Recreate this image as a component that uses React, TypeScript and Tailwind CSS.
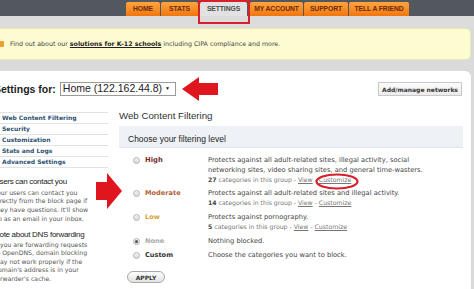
import React from "react";

function Radio({ checked = false }: { checked?: boolean }) {
  return (
    <div className="w-[7px] h-[7px] mt-[1.5px] rounded-full border border-[#b5b5b5] bg-linear-to-b from-[#f4f4f4] to-[#d8d8d8] flex items-center justify-center shrink-0">
      {checked && <div className="w-[3px] h-[3px] rounded-full bg-[#555]" />}
    </div>
  );
}

function Cats({ n }: { n: string }) {
  return (
    <div className="text-[6.2px] leading-[10px] text-[#777] whitespace-nowrap">
      <span className="font-bold text-[#444]">{n}</span> categories in this group -{" "}
      <span className="underline">View</span> - <span className="underline">Customize</span>
    </div>
  );
}

export default function App() {
  const tabs = [
    { t: "HOME", w: "w-[34px]", ml: "ml-0" },
    { t: "STATS", w: "w-[37px]", ml: "ml-[1px]" },
    { t: "SETTINGS", w: "w-[47px]", ml: "ml-[2px]", active: true },
    { t: "MY ACCOUNT", w: "w-[53px]", ml: "ml-[3px]" },
    { t: "SUPPORT", w: "w-[44px]", ml: "ml-[1px]" },
    { t: "TELL A FRIEND", w: "w-[60px]", ml: "ml-[1px]" },
  ];
  return (
    <div className="w-[474px] h-[289px] overflow-hidden bg-[#dadada] flex flex-col relative font-['DejaVu_Sans',sans-serif] text-[#333]">
      {/* header */}
      <div className="h-[16px] shrink-0 bg-[#52585e] flex items-end pl-[126px]">
        {tabs.map((tab) => (
          <div
            key={tab.t}
            className={`${tab.w} ${tab.ml} h-[14px] rounded-t-[2px] flex items-center justify-center font-['Liberation_Sans',sans-serif] font-bold text-[6.8px] tracking-[-0.1px] whitespace-nowrap ${
              tab.active
                ? "bg-[#e2e2e2] text-[#4a4a4a]"
                : "bg-linear-to-b from-[#ffa53e] to-[#f0760a] text-[#6e2b04]"
            }`}
          >
            {tab.t}
          </div>
        ))}
      </div>
      {/* grey strip */}
      <div className="h-[12px] shrink-0 bg-[#dcdcdc]" />
      {/* notice */}
      <div className="h-[32px] shrink-0 ml-[-4px] mr-[3px] bg-[#fdfbd2] border border-[#ebe7b4] rounded-r-[5px] flex items-center">
        <div className="w-[7px] h-[6px] bg-[#f0a030] rounded-[1px] shrink-0" />
        <div className="ml-[6px] text-[6.3px] text-[#444] whitespace-nowrap">
          Find out about our{" "}
          <span className="font-bold underline text-[#222]">solutions for K-12 schools</span>{" "}
          including CIPA compliance and more.
        </div>
      </div>
      <div className="h-[11px] shrink-0" />
      {/* white panel */}
      <div className="flex-1 mr-[3px] bg-white rounded-tr-[6px] relative">
        <div className="ml-[-6px]">
          {/* top row */}
          <div className="flex items-center pt-[11px] pr-[9px]">
            <div className="font-['Liberation_Sans',sans-serif] font-bold text-[10.5px] leading-[14px] text-[#222] whitespace-nowrap">
              Settings for:
            </div>
            <div className="ml-[4px] h-[14px] w-[116px] border border-[#9a9a9a] flex items-center pl-[2px] font-['Liberation_Sans',sans-serif] text-[10.5px] text-[#222] whitespace-nowrap">
              Home (122.162.44.8)
              <span className="ml-[3px] text-[5px]">▼</span>
            </div>
            <svg className="ml-[6px] my-[-5px] shrink-0" width="36" height="24" viewBox="0 0 36 24">
              <polygon points="0,12 17,0 17,6 36,6 36,18 17,18 17,24" fill="#e0161f" />
            </svg>
            <div className="flex-1" />
            <div className="h-[14px] w-[84px] border border-[#c8c8c8] bg-linear-to-b from-[#fbfbfb] to-[#ececec] flex items-center justify-center text-[6px] font-bold text-[#333] whitespace-nowrap">
              Add/manage networks
            </div>
          </div>

          {/* columns */}
          <div className="flex mt-[14px]">
            {/* sidebar */}
            <div className="w-[114px] shrink-0 pt-[2px]">
              <div className="border-t border-[#e2e2e2]">
                {["Web Content Filtering", "Security", "Customization", "Stats and Logs", "Advanced Settings"].map((s) => (
                  <div
                    key={s}
                    className="h-[11px] border-b border-[#e2e2e2] pl-[8px] text-[6px] leading-[10px] font-bold text-[#2c5272] whitespace-nowrap"
                  >
                    {s}
                  </div>
                ))}
              </div>
              <div className="mt-[9px] font-['Liberation_Sans',sans-serif] text-[8px] leading-[10px] tracking-[-0.3px] text-[#222] whitespace-nowrap">
                Users can contact you
              </div>
              <div className="mt-[1.5px] text-[6.2px] leading-[8.7px] text-[#555] whitespace-nowrap">
                <div>Your users can contact you</div>
                <div>directly from the block page if</div>
                <div>they have questions. It'll show</div>
                <div>up as an email in your inbox.</div>
              </div>
              <div className="mt-[6.5px] font-['Liberation_Sans',sans-serif] text-[8px] leading-[10px] tracking-[-0.3px] text-[#222] whitespace-nowrap">
                Note about DNS forwarding
              </div>
              <div className="mt-[1px] text-[6.2px] leading-[8.5px] text-[#555] whitespace-nowrap">
                <div>If you are forwarding requests</div>
                <div>to OpenDNS, domain blocking</div>
                <div>may not work properly if the</div>
                <div>domain's address is in your</div>
                <div>forwarder's cache.</div>
              </div>
            </div>

            {/* main */}
            <div className="ml-[11px] w-[344px] shrink-0">
              <div className="font-['Liberation_Sans',sans-serif] text-[9.7px] leading-[12px] text-[#333] whitespace-nowrap">
                Web Content Filtering
              </div>
              <div className="mt-[4px]">
                <div className="h-[22px] bg-[#eef2f7] border-b border-[#dfe5ec] pl-[9px] pt-[8px] font-['Liberation_Sans',sans-serif] text-[8.5px] leading-[10px] text-[#222]">
                  Choose your filtering level
                </div>
                <div className="pt-[7px] pl-[14px]">
                  {/* High */}
                  <div className="flex">
                    <Radio />
                    <div className="ml-[5px] w-[63px] shrink-0 text-[6.8px] leading-[10px] font-bold text-[#7a2b2b]">High</div>
                    <div className="flex-1">
                      <div className="text-[6.7px] leading-[10px] text-[#444] whitespace-nowrap">
                        <div>Protects against all adult-related sites, illegal activity, social</div>
                        <div>networking sites, video sharing sites, and general time-wasters.</div>
                      </div>
                      <Cats n="27" />
                    </div>
                  </div>
                  {/* Moderate */}
                  <div className="flex mt-[3px]">
                    <Radio />
                    <div className="ml-[5px] w-[63px] shrink-0 text-[6.6px] leading-[10px] font-bold text-[#b0653b]">Moderate</div>
                    <div className="flex-1">
                      <div className="text-[6.7px] leading-[10px] text-[#444] whitespace-nowrap">
                        Protects against all adult-related sites and illegal activity.
                      </div>
                      <Cats n="14" />
                    </div>
                  </div>
                  {/* Low */}
                  <div className="flex mt-[4px]">
                    <Radio />
                    <div className="ml-[5px] w-[63px] shrink-0 text-[6.6px] leading-[10px] font-bold text-[#d6a23a]">Low</div>
                    <div className="flex-1">
                      <div className="text-[6.7px] leading-[10px] text-[#444] whitespace-nowrap">
                        Protects against pornography.
                      </div>
                      <Cats n="5" />
                    </div>
                  </div>
                  {/* None */}
                  <div className="flex mt-[4px]">
                    <Radio checked />
                    <div className="ml-[5px] w-[63px] shrink-0 text-[6.6px] leading-[10px] font-bold text-[#aaaaaa]">None</div>
                    <div className="flex-1 text-[6.7px] leading-[10px] text-[#444] whitespace-nowrap">
                      Nothing blocked.
                    </div>
                  </div>
                  {/* Custom */}
                  <div className="flex mt-[4px]">
                    <Radio />
                    <div className="ml-[5px] w-[63px] shrink-0 text-[6.6px] leading-[10px] font-bold text-[#333]">Custom</div>
                    <div className="flex-1 text-[6.7px] leading-[10px] text-[#444] whitespace-nowrap">
                      Choose the categories you want to block.
                    </div>
                  </div>
                </div>
                <div className="mt-[11px] ml-[8px] w-[38px] h-[12px] rounded-full border border-[#a8a8a8] bg-linear-to-b from-[#ffffff] to-[#e2e2e2] flex items-center justify-center text-[6px] font-bold text-[#333]">
                  APPLY
                </div>
              </div>
            </div>
          </div>
        </div>
      </div>

      {/* annotations */}
      <div className="absolute left-[198px] top-0 w-[52px] h-[24px] border-2 border-[#d6202a]" />
      <svg className="absolute left-[96px] top-[173px]" width="26" height="36" viewBox="0 0 26 36">
        <polygon points="0,9 11,9 11,0 26,18 11,36 11,27 0,27" fill="#e0161f" />
      </svg>
      <svg className="absolute left-[315px] top-[173px]" width="44" height="17" viewBox="0 0 44 17">
        <ellipse cx="22" cy="8.5" rx="20.5" ry="7" fill="none" stroke="#d6202a" strokeWidth="2.2" />
      </svg>
    </div>
  );
}
